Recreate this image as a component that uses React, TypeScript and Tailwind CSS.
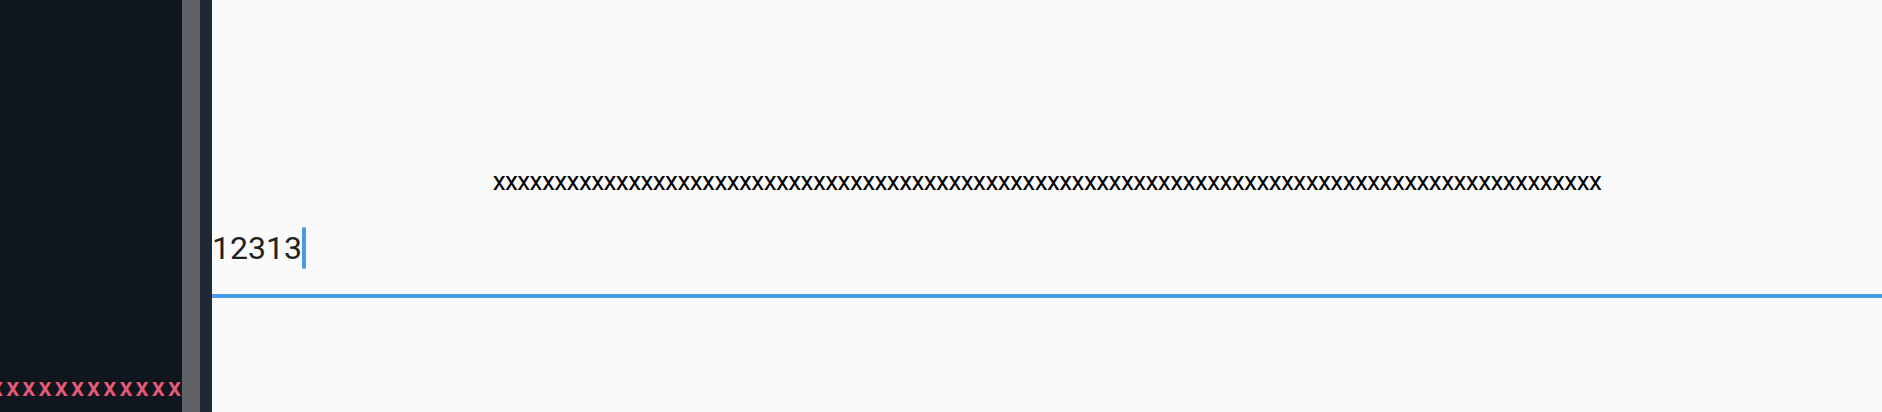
// Editor split view: dark side panel, scrollbar, and a light text-input pane.

const X_ROW = 'x'.repeat(90)
const PINK_ROW = 'x'.repeat(20)

export default function App() {
  return (
    <div className="flex h-[412px] w-full overflow-hidden bg-[#fafafa]" style={{ fontFamily: 'Roboto, "Noto Sans", sans-serif' }}>
      {/* Dark side panel */}
      <div className="flex w-[182px] shrink-0 flex-col justify-end overflow-hidden bg-[#10161e] pb-[12px]">
        <div className="-ml-[10px] whitespace-nowrap text-[26px] font-medium leading-none tracking-[3.1px] text-[#e85a7a]">
          {PINK_ROW}
        </div>
      </div>

      {/* Scrollbar */}
      <div className="w-[18px] shrink-0 bg-[#5f6368]" />
      <div className="w-[12px] shrink-0 bg-[#1e2732]" />

      {/* Light pane */}
      <div className="flex min-w-0 flex-1 flex-col pt-[168px]">
        <div className="whitespace-nowrap text-center text-[26px] leading-none tracking-[-0.58px] text-black">
          {X_ROW}
        </div>

        <div className="mt-[33px] flex h-[42px] items-center">
          <span className="text-[32px] leading-none text-[#212121]">12313</span>
          <span className="h-[42px] w-[4px] rounded-full bg-[#4a98e8]" />
        </div>

        <div className="mt-[25px] h-[4px] w-full bg-[#4a98e8]" />
      </div>
    </div>
  )
}
